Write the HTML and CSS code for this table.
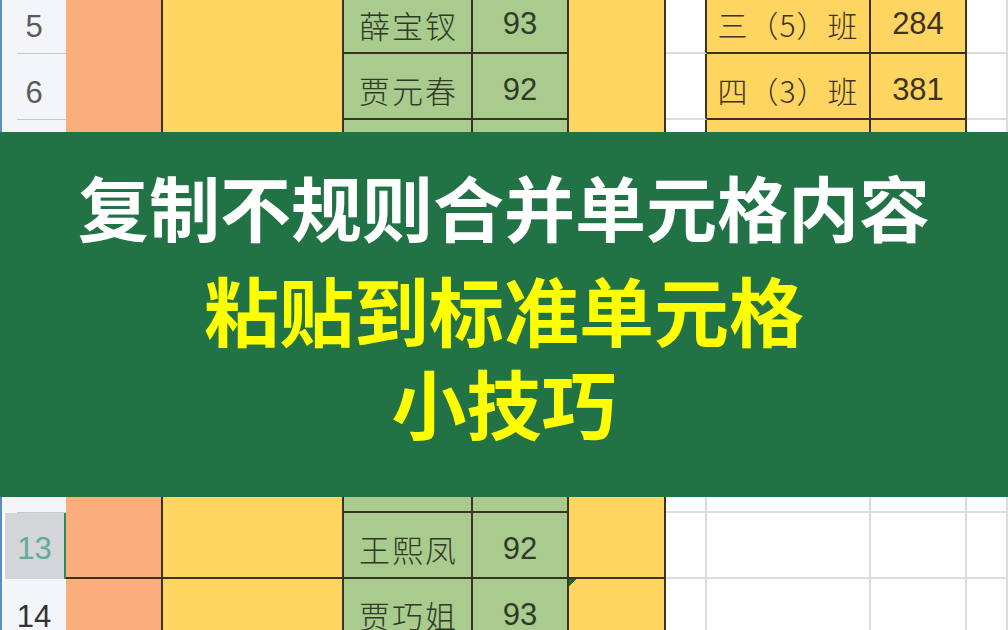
FILE: index.html
```html
<!DOCTYPE html>
<html lang="zh-CN">
<head>
<meta charset="utf-8">
<title>复制不规则合并单元格内容</title>
<link rel="stylesheet" href="styles.css">
</head>
<body>
<div class="stage">
  <div class="sheet">
    <!-- row 5 -->
    <div class="rh">5</div>
    <div class="c orange merged"></div>
    <div class="c yellow merged"></div>
    <div class="c green name">薛宝钗</div>
    <div class="c green num">93</div>
    <div class="c yellow merged"></div>
    <div class="w edge"></div>
    <div class="c yellow cls">三（5）班</div>
    <div class="c yellow num">284</div>
    <div class="w"></div>
    <!-- row 6 -->
    <div class="rh">6</div>
    <div class="c green name">贾元春</div>
    <div class="c green num">92</div>
    <div class="w edge"></div>
    <div class="c yellow cls">四（3）班</div>
    <div class="c yellow num">381</div>
    <div class="w"></div>
    <!-- row 7 (under banner) -->
    <div class="rh"></div>
    <div class="c green"></div>
    <div class="c green"></div>
    <div class="w edge"></div>
    <div class="c yellow"></div>
    <div class="c yellow"></div>
    <div class="w"></div>
    <!-- row 8 -->
    <div class="rh"></div>
    <div class="c green"></div>
    <div class="c green"></div>
    <div class="w edge"></div>
    <div class="c yellow"></div>
    <div class="c yellow"></div>
    <div class="w"></div>
    <!-- row 9 -->
    <div class="rh"></div>
    <div class="c green"></div>
    <div class="c green"></div>
    <div class="w"></div>
    <div class="w"></div>
    <div class="w"></div>
    <div class="w"></div>
    <!-- row 10 -->
    <div class="rh"></div>
    <div class="c green"></div>
    <div class="c green"></div>
    <div class="w"></div>
    <div class="w"></div>
    <div class="w"></div>
    <div class="w"></div>
    <!-- row 11 -->
    <div class="rh"></div>
    <div class="c green"></div>
    <div class="c green"></div>
    <div class="w"></div>
    <div class="w"></div>
    <div class="w"></div>
    <div class="w"></div>
    <!-- row 12 -->
    <div class="rh"></div>
    <div class="c green"></div>
    <div class="c green"></div>
    <div class="w"></div>
    <div class="w"></div>
    <div class="w"></div>
    <div class="w"></div>
    <!-- row 13 -->
    <div class="rh sel">13</div>
    <div class="c green name">王熙凤</div>
    <div class="c green num">92</div>
    <div class="w"></div>
    <div class="w"></div>
    <div class="w"></div>
    <div class="w"></div>
    <!-- row 14 -->
    <div class="rh dark">14</div>
    <div class="c orange"></div>
    <div class="c yellow"></div>
    <div class="c green name">贾巧姐</div>
    <div class="c green num">93</div>
    <div class="c yellow flag"></div>
    <div class="w"></div>
    <div class="w"></div>
    <div class="w"></div>
    <div class="w"></div>
  </div>

  <div class="banner">
    <div class="line white">复制不规则合并单元格内容</div>
    <div class="line yel l2">粘贴到标准单元格</div>
    <div class="line yel l3">小技巧</div>
  </div>
</div>
</body>
</html>
```

FILE: styles.css
```css
* { box-sizing: border-box; }

html, body {
  margin: 0;
  padding: 0;
  width: 1008px;
  height: 630px;
  overflow: hidden;
  background: #ffffff;
}

.stage {
  position: relative;
  width: 1008px;
  height: 630px;
  overflow: hidden;
}

.sheet {
  margin-top: -11.6px;
  display: grid;
  grid-template-columns: 64px 97px 181px 129px 96px 97px 41px 164px 96px 1fr;
  grid-template-rows: repeat(10, 65.6px);
  border-left: 2px solid #5a8cc0;
}

.rh {
  display: flex;
  align-items: center;
  justify-content: center;
  padding-top: 12px;
  font-family: "Liberation Sans", Arial, sans-serif;
  font-size: 31px;
  color: #5a5a5a;
  background:
    linear-gradient(#c9c9c9, #c9c9c9) no-repeat 15px 100% / calc(100% - 15px) 1px,
    #f4f5f9;
}

.rh.sel {
  color: #62ab9c;
  background: #d3d5d9;
  border-right: 2px solid #2e8a5c;
  margin-left: 3px;
  padding-top: 6px;
}

.rh.dark { color: #333333; padding-top: 10px; }

.c {
  border-right: 2px solid #3a3325;
  border-bottom: 2px solid #3a3325;
  display: flex;
  align-items: center;
  justify-content: center;
  padding-top: 8px;
}

.merged { grid-row: span 9; }

.orange { background: #f9ae7c; }
.yellow { background: #fed561; }
.green  { background: #a9cb8e; }

.name {
  font-family: "Noto Sans CJK SC", sans-serif;
  font-weight: 300;
  font-size: 31px;
  letter-spacing: 2px;
  color: #2e3b28;
  padding-left: 2px;
}

.num {
  font-family: "Liberation Sans", Arial, sans-serif;
  font-size: 31px;
  color: #2e3b28;
}

.yellow.num { color: #3d3222; }

.cls {
  font-family: "Noto Sans CJK SC", sans-serif;
  font-weight: 300;
  font-size: 30px;
  color: #3d3222;
  letter-spacing: 1px;
}

.flag {
  background:
    linear-gradient(135deg, #1f6a2a 0, #1f6a2a 5px, transparent 5px) no-repeat 0 0 / 10px 10px,
    #fed561;
}

.w {
  background: #ffffff;
  border-right: 2px solid #dcdcdc;
  border-bottom: 2px solid #dcdcdc;
}

.w.edge { border-right-color: #3a3325; }

.banner {
  position: absolute;
  left: 0;
  top: 132px;
  width: 1008px;
  height: 365px;
  background: #217346;
  display: flex;
  flex-direction: column;
  align-items: center;
  padding-top: 38px;
  font-family: "Noto Sans CJK SC", sans-serif;
  font-weight: 700;
}

.line {
  line-height: 1;
  white-space: nowrap;
}

.white {
  color: #ffffff;
  font-size: 71px;
}

.yel {
  color: #ffff00;
  font-size: 75px;
}

.l2 { margin-top: 30px; }
.l3 { margin-top: 18px; }
```
